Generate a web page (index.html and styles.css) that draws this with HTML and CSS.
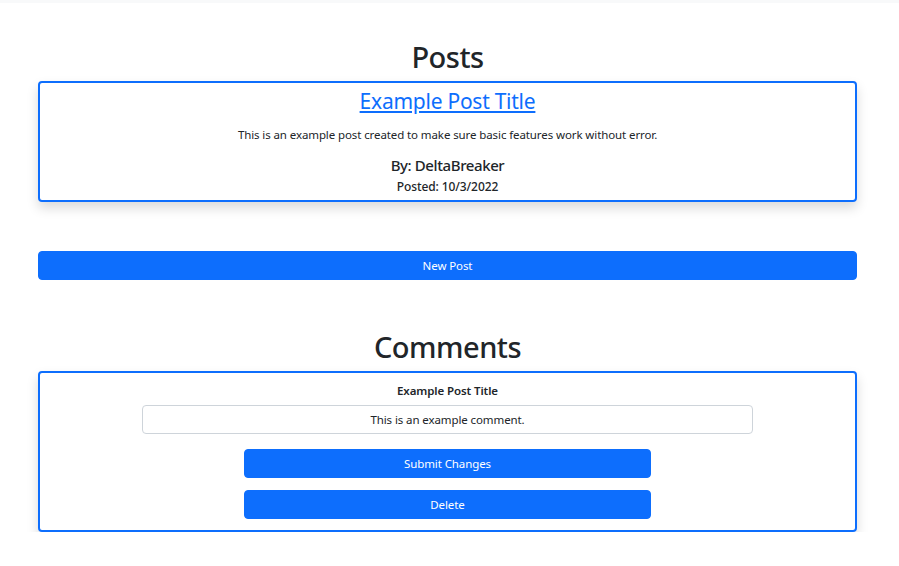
FILE: index.html
```html
<!DOCTYPE html>
<html lang="en">
<head>
  <meta charset="UTF-8">
  <meta name="viewport" content="width=device-width, initial-scale=1.0">
  <title>Posts</title>
  <link rel="stylesheet" href="styles.css">
</head>
<body>
  <div class="topbar"></div>

  <main class="container">
    <h1 class="section-title">Posts</h1>
    <div class="card post-card">
      <h3 class="post-title"><a href="#">Example Post Title</a></h3>
      <p class="post-body">This is an example post created to make sure basic features work without error.</p>
      <h5 class="post-author">By: DeltaBreaker</h5>
      <h6 class="post-date">Posted: 10/3/2022</h6>
    </div>

    <button class="btn btn-wide">New Post</button>

    <h1 class="section-title comments-title">Comments</h1>
    <div class="card comment-card">
      <label class="comment-label" for="comment">Example Post Title</label>
      <input id="comment" class="comment-input" type="text" value="This is an example comment.">
      <button class="btn btn-half btn-submit">Submit Changes</button>
      <button class="btn btn-half">Delete</button>
    </div>
  </main>
</body>
</html>
```

FILE: styles.css
```css
body {
  margin: 0;
  font-family: "Noto Sans", "Open Sans", sans-serif;
  font-size: 11.5px;
  line-height: 1.5;
  letter-spacing: -0.1px;
  color: #212529;
  background-color: #fff;
}
.topbar {
  height: 3px;
  background-color: #f8f9fa;
}
.container {
  width: 819px;
  margin: 0 0 0 38px;
  padding-top: 36px;
}
.section-title {
  margin: 0 0 6px;
  height: 36px;
  font-size: 29px;
  font-weight: 500;
  line-height: 36px;
  letter-spacing: -0.5px;
  text-align: center;
}
.card {
  border: 2px solid #0d6efd;
  border-radius: 4px;
  box-shadow: 0 6px 12px rgba(0, 0, 0, 0.15);
  text-align: center;
}
.post-card {
  padding: 5px 12px 6px;
}
.post-title {
  margin: 0 0 12px;
  height: 26px;
  font-size: 21px;
  font-weight: 400;
  line-height: 26px;
  letter-spacing: -0.25px;
}
.post-title a {
  color: #0d6efd;
}
.post-body {
  margin: 0 0 12px;
  height: 18px;
  line-height: 18px;
}
.post-author {
  margin: 0 0 6px;
  height: 18px;
  font-size: 15px;
  font-weight: 500;
  line-height: 18px;
  letter-spacing: -0.4px;
}
.post-date {
  margin: 0;
  height: 14px;
  font-size: 12px;
  font-weight: 500;
  line-height: 14px;
}
.btn {
  display: block;
  height: 29px;
  padding: 0 9px;
  font-family: inherit;
  font-size: 11.5px;
  letter-spacing: -0.1px;
  color: #fff;
  background-color: #0d6efd;
  border: 1px solid #0d6efd;
  border-radius: 4px;
  cursor: pointer;
}
.btn-wide {
  width: 100%;
  margin-top: 49px;
  margin-bottom: 49px;
}
.comment-card {
  padding: 9px 0 11px;
}
.comment-label {
  display: block;
  height: 18px;
  margin-bottom: 5px;
  font-weight: 600;
  line-height: 18px;
}
.comment-input {
  display: block;
  box-sizing: border-box;
  width: 75%;
  height: 29px;
  margin: 0 auto;
  padding: 0 9px;
  font-family: inherit;
  font-size: 11.5px;
  letter-spacing: -0.1px;
  color: #212529;
  text-align: center;
  border: 1px solid #ced4da;
  border-radius: 4px;
}
.btn-half {
  width: 50%;
  margin: 12px auto 0;
}
.btn-submit {
  margin-top: 15px;
}
```
